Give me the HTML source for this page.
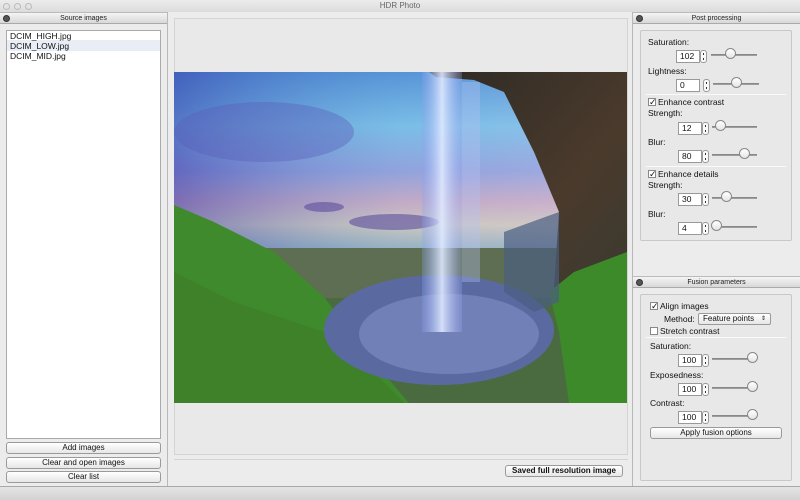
<!DOCTYPE html>
<html><head><meta charset="utf-8"><style>
*{box-sizing:border-box;margin:0;padding:0}
body{width:800px;height:500px;overflow:hidden;background:#ececec;font-family:"Liberation Sans",sans-serif;font-size:8.5px;color:#111;position:relative}
.a{position:absolute}
.hdr{position:absolute;height:12px;background:linear-gradient(#f4f4f4,#d8d8d8);border-top:1px solid #bbb;border-bottom:1px solid #aaa;font-size:7px;text-align:center;line-height:11px;color:#222}
.hdr i{position:absolute;left:3px;top:2px;width:7px;height:7px;border-radius:50%;background:#555;border:1px solid #333}
.btn{position:absolute;height:12px;background:linear-gradient(#fff,#e6e6e6);border:1px solid #9a9a9a;border-radius:3px;text-align:center;line-height:10px;font-size:8px}
.grp{position:absolute;border:1px solid #c8c8c8;background:#e8e8e8;border-radius:2px}
.sp{position:absolute;width:24px;height:13px;background:#fff;border:1px solid #999;font-size:8.5px;line-height:11px;padding-left:3px}
.ar{position:absolute;width:7px;height:13px;border:1px solid #999;border-radius:3px;background:#fafafa}
.ar:before,.ar:after{content:"";position:absolute;left:2px;width:1px;height:2px;background:#333}
.ar:before{top:2px}.ar:after{bottom:2px}
.tr{position:absolute;height:2px;background:#9d9d9d;border-top:1px solid #888}
.kn{position:absolute;width:11px;height:11px;border-radius:50%;background:linear-gradient(#fff,#e4e4e4);border:1px solid #888}
.sep{position:absolute;height:1px;background:#cfcfcf;border-bottom:1px solid #fafafa}
.cb{position:absolute;width:8px;height:8px;border:1px solid #888;background:#fff;font-size:9px;line-height:6px}
</style></head><body>
<div class="a" style="left:0;top:0;width:800px;height:12px;background:linear-gradient(#ececec,#dcdcdc);text-align:center;font-size:8px;line-height:12px;color:#666">HDR Photo</div>
<div class="a" style="left:3px;top:3px;width:7px;height:7px;border-radius:50%;border:1px solid #bbb"></div>
<div class="a" style="left:14px;top:3px;width:7px;height:7px;border-radius:50%;border:1px solid #bbb"></div>
<div class="a" style="left:25px;top:3px;width:7px;height:7px;border-radius:50%;border:1px solid #bbb"></div>

<div class="hdr" style="left:0;top:12px;width:167px"><i></i>Source images</div>
<div class="a" style="left:167px;top:12px;width:1px;height:475px;background:#b8b8b8"></div>
<div class="a" style="left:6px;top:30px;width:155px;height:409px;background:#fff;border:1px solid #aaa"></div>
<div class="a" style="left:7px;top:40px;width:153px;height:11px;background:#e8edf6"></div>
<div class="a" style="left:10px;top:31px;font-size:8.5px;line-height:10px">DCIM_HIGH.jpg<br>DCIM_LOW.jpg<br>DCIM_MID.jpg</div>
<div class="btn" style="left:6px;top:442px;width:155px">Add images</div>
<div class="btn" style="left:6px;top:457px;width:155px">Clear and open images</div>
<div class="btn" style="left:6px;top:471px;width:155px">Clear list</div>

<div class="a" style="left:174px;top:18px;width:454px;height:437px;border:1px solid #d4d4d4;background:#e9e9e9"></div>
<div class="a" style="left:174px;top:459px;width:454px;height:1px;background:#d4d4d4"></div>
<svg class="a" style="left:174px;top:72px" width="453" height="331" viewBox="0 0 453 331">
<defs>
<linearGradient id="sky" x1="0" y1="0" x2="0" y2="1"><stop offset="0" stop-color="#4c7ad0"/><stop offset="0.3" stop-color="#7fb6e6"/><stop offset="0.55" stop-color="#9f8fd8"/><stop offset="0.72" stop-color="#e49ab8"/><stop offset="0.85" stop-color="#f0c2b0"/><stop offset="1" stop-color="#9aa0b4"/></linearGradient>
<linearGradient id="sky2" x1="0" y1="0" x2="1" y2="0"><stop offset="0" stop-color="#3a4fb0" stop-opacity=".6"/><stop offset=".5" stop-color="#6fd0e8" stop-opacity=".3"/><stop offset="1" stop-color="#b0d8f0" stop-opacity=".4"/></linearGradient>
<linearGradient id="wf" x1="0" y1="0" x2="1" y2="0"><stop offset="0" stop-color="#8aa0ee" stop-opacity=".3"/><stop offset=".5" stop-color="#e0eaff"/><stop offset="1" stop-color="#9aa8f0" stop-opacity=".3"/></linearGradient>
<linearGradient id="cave" x1="0" y1="0" x2="1" y2="1"><stop offset="0" stop-color="#2e2a24"/><stop offset=".6" stop-color="#4a3a2c"/><stop offset="1" stop-color="#3a3a30"/></linearGradient>
</defs>
<rect width="453" height="331" fill="#4a6a40"/>
<rect width="453" height="180" fill="url(#sky)"/>
<rect width="453" height="180" fill="url(#sky2)"/>
<ellipse cx="90" cy="60" rx="90" ry="30" fill="#5a5cb8" opacity=".4"/>
<ellipse cx="220" cy="150" rx="45" ry="8" fill="#5a4c9c" opacity=".6"/>
<ellipse cx="150" cy="135" rx="20" ry="5" fill="#5a4c9c" opacity=".6"/>
<rect y="176" width="453" height="50" fill="#5e6e52"/>
<path d="M0 133 L40 150 L100 180 L150 225 L200 290 L235 331 L0 331Z" fill="#3f8a2c"/>
<path d="M0 200 L60 230 L150 260 L200 300 L230 331 L0 331Z" fill="#3e7e28" opacity=".8"/>
<ellipse cx="265" cy="258" rx="115" ry="55" fill="#5a6aa0"/>
<ellipse cx="275" cy="262" rx="90" ry="40" fill="#7280b8"/>
<path d="M255 0 L453 0 L453 230 L380 215 L385 140 L360 80 L330 20 L300 8 L262 5Z" fill="url(#cave)"/>
<path d="M453 180 L453 331 L395 331 L385 260 L375 220 L400 200Z" fill="#3d8a2a"/>
<path d="M330 160 L385 140 L385 230 L360 240 L330 220Z" fill="#4a5e82" opacity=".7"/>
<rect x="248" y="0" width="40" height="260" fill="url(#wf)" opacity=".9"/>
<rect x="288" y="10" width="18" height="200" fill="#b8c4f4" opacity=".35"/>
</svg>
<div class="btn" style="left:505px;top:465px;width:118px;font-weight:bold;font-size:8px">Saved full resolution image</div>

<div class="a" style="left:632px;top:12px;width:1px;height:475px;background:#b8b8b8"></div>
<div class="hdr" style="left:633px;top:12px;width:167px"><i></i>Post processing</div>
<div class="grp" style="left:640px;top:30px;width:152px;height:211px"></div>
<div class="a" style="left:648px;top:37px">Saturation:</div>
<div class="sp" style="left:676px;top:50px">102</div><div class="ar" style="left:700px;top:50px"></div><div class="tr" style="left:711px;top:54px;width:46px"></div><div class="kn" style="left:725px;top:48px"></div>
<div class="a" style="left:648px;top:66px">Lightness:</div>
<div class="sp" style="left:676px;top:79px">0</div><div class="ar" style="left:703px;top:79px"></div><div class="tr" style="left:713px;top:83px;width:46px"></div><div class="kn" style="left:731px;top:77px"></div>
<div class="sep" style="left:646px;top:94px;width:140px"></div>
<div class="cb" style="left:648px;top:98px">✓</div><div class="a" style="left:658px;top:97px">Enhance contrast</div>
<div class="a" style="left:648px;top:108px">Strength:</div>
<div class="sp" style="left:678px;top:122px">12</div><div class="ar" style="left:702px;top:122px"></div><div class="tr" style="left:712px;top:126px;width:45px"></div><div class="kn" style="left:715px;top:120px"></div>
<div class="a" style="left:648px;top:137px">Blur:</div>
<div class="sp" style="left:678px;top:150px">80</div><div class="ar" style="left:702px;top:150px"></div><div class="tr" style="left:712px;top:154px;width:45px"></div><div class="kn" style="left:739px;top:148px"></div>
<div class="sep" style="left:646px;top:166px;width:140px"></div>
<div class="cb" style="left:648px;top:170px">✓</div><div class="a" style="left:658px;top:169px">Enhance details</div>
<div class="a" style="left:648px;top:180px">Strength:</div>
<div class="sp" style="left:678px;top:193px">30</div><div class="ar" style="left:702px;top:193px"></div><div class="tr" style="left:712px;top:197px;width:45px"></div><div class="kn" style="left:721px;top:191px"></div>
<div class="a" style="left:648px;top:209px">Blur:</div>
<div class="sp" style="left:678px;top:222px">4</div><div class="ar" style="left:702px;top:222px"></div><div class="tr" style="left:712px;top:226px;width:45px"></div><div class="kn" style="left:711px;top:220px"></div>

<div class="hdr" style="left:633px;top:276px;width:167px"><i></i>Fusion parameters</div>
<div class="grp" style="left:640px;top:294px;width:152px;height:187px"></div>
<div class="cb" style="left:650px;top:302px">✓</div><div class="a" style="left:660px;top:301px">Align images</div>
<div class="a" style="left:664px;top:314px">Method:</div>
<div class="btn" style="left:698px;top:313px;width:73px;text-align:left;padding-left:4px;border-radius:2px">Feature points<span style="position:absolute;right:4px;font-size:6px">⇕</span></div>
<div class="cb" style="left:650px;top:327px"></div><div class="a" style="left:660px;top:326px">Stretch contrast</div>
<div class="sep" style="left:646px;top:337px;width:140px"></div>
<div class="a" style="left:650px;top:341px">Saturation:</div>
<div class="sp" style="left:678px;top:354px">100</div><div class="ar" style="left:702px;top:354px"></div><div class="tr" style="left:712px;top:358px;width:45px"></div><div class="kn" style="left:747px;top:352px"></div>
<div class="a" style="left:650px;top:370px">Exposedness:</div>
<div class="sp" style="left:678px;top:383px">100</div><div class="ar" style="left:702px;top:383px"></div><div class="tr" style="left:712px;top:387px;width:45px"></div><div class="kn" style="left:747px;top:381px"></div>
<div class="a" style="left:650px;top:398px">Contrast:</div>
<div class="sp" style="left:678px;top:411px">100</div><div class="ar" style="left:702px;top:411px"></div><div class="tr" style="left:712px;top:415px;width:45px"></div><div class="kn" style="left:747px;top:409px"></div>
<div class="btn" style="left:650px;top:427px;width:132px">Apply fusion options</div>

<div class="a" style="left:0;top:486px;width:800px;height:14px;background:linear-gradient(#e4e4e4,#d2d2d2);border-top:1px solid #a8a8a8"></div>
</body></html>
